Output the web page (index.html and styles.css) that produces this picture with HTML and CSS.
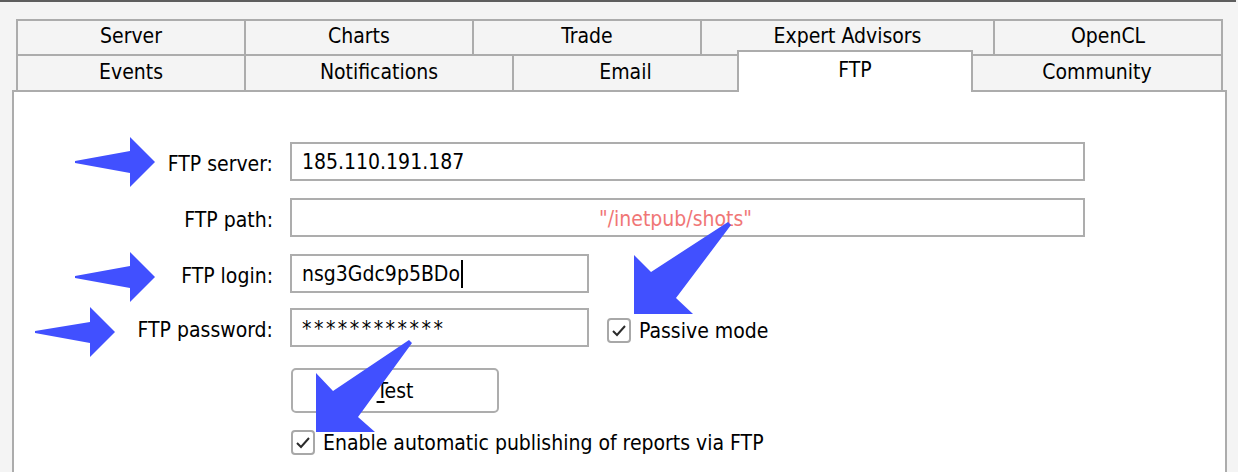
FILE: index.html
```html
<!DOCTYPE html>
<html>
<head>
<meta charset="utf-8">
<link rel="stylesheet" href="styles.css">
</head>
<body>
<div class="window">
  <div class="topline"></div>
  <div class="tabs">
    <div class="row row1">
      <div class="tab w-server">Server</div>
      <div class="tab w-charts">Charts</div>
      <div class="tab w-trade">Trade</div>
      <div class="tab w-ea">Expert Advisors</div>
      <div class="tab w-opencl last">OpenCL</div>
    </div>
    <div class="row row2">
      <div class="tab w-events">Events</div>
      <div class="tab w-notif">Notifications</div>
      <div class="tab w-email">Email</div>
      <div class="tab w-ftp active">FTP</div>
      <div class="tab w-comm last">Community</div>
    </div>
  </div>
  <div class="panel">
    <div class="frow">
      <div class="lbl">FTP server:</div>
      <div class="field wide">185.110.191.187</div>
    </div>
    <div class="frow gap17">
      <div class="lbl">FTP path:</div>
      <div class="field wide"><span class="note">"/inetpub/shots"</span></div>
    </div>
    <div class="frow gap17">
      <div class="lbl">FTP login:</div>
      <div class="field narrow">nsg3Gdc9p5BDo<span class="caret"></span></div>
    </div>
    <div class="frow gap15">
      <div class="lbl">FTP password:</div>
      <div class="field narrow"><span class="secret">************</span></div>
      <div class="check passive">
        <div class="cb"><svg width="16" height="14" viewBox="0 0 16 14"><path d="M2 7 L6 11 L14 2" fill="none" stroke="#2b2b2b" stroke-width="2"/></svg></div>
        <span>Passive mode</span>
      </div>
    </div>
    <div class="frow gap21 indent">
      <div class="btn"><span><u>T</u>est</span></div>
    </div>
    <div class="frow gap17 indent">
      <div class="check">
        <div class="cb"><svg width="16" height="14" viewBox="0 0 16 14"><path d="M2 7 L6 11 L14 2" fill="none" stroke="#2b2b2b" stroke-width="2"/></svg></div>
        <span>Enable automatic publishing of reports via FTP</span>
      </div>
    </div>
  </div>
  <svg class="annot" width="1238" height="472" viewBox="0 0 1238 472">
    <polygon points="75,161 130,151 130,137 155,162 130,187 130,173 75,163"/>
    <polygon points="75,276 130,266 130,252 155,277 130,302 130,288 75,278"/>
    <polygon points="35,331 90,322 90,307 115,332 90,357 90,343 35,333"/>
    <polygon points="728,222 651,272 634,255 634,314 693,314 676,298 731,225"/>
    <polygon points="409,340 333,391 316,373 316,432 375,432 358,417 412,343"/>
  </svg>
</div>
</body>
</html>
```

FILE: styles.css
```css
* { box-sizing: border-box; }

body {
  margin: 0;
  background: #f4f4f4;
  font-family: "DejaVu Sans Condensed", "DejaVu Sans", sans-serif;
  font-stretch: condensed;
  font-size: 21px;
  color: #000;
}

.window {
  position: relative;
  width: 1238px;
  height: 472px;
  overflow: hidden;
}

.topline {
  height: 2px;
  background: #5e5e5e;
  width: 1236px;
}

.tabs {
  margin: 17px 0 0 16px;
}

.row {
  display: flex;
}

.row1 { height: 35px; }
.row2 { height: 36px; }

.tab {
  border-top: 2px solid #acacac;
  border-left: 2px solid #acacac;
  background: #f4f4f4;
  display: flex;
  align-items: center;
  justify-content: center;
  line-height: 1;
  padding-bottom: 2px;
  white-space: nowrap;
}

.tab.last { border-right: 2px solid #acacac; }

.w-server, .w-charts, .w-trade, .w-events { width: 228px; }
.w-ea { width: 293px; }
.w-opencl { width: 230px; }
.w-notif { width: 268px; }
.w-email { width: 225px; }
.w-ftp { width: 236px; }
.w-comm { width: 252px; }

.tab.active {
  position: relative;
  z-index: 1;
  background: #fff;
  height: 42px;
  margin-top: -4px;
  margin-right: -2px;
  border-right: 2px solid #acacac;
  padding-bottom: 4px;
}

.panel {
  margin-left: 12px;
  width: 1215px;
  height: 400px;
  border: 2px solid #acacac;
  border-bottom: none;
  background: #fff;
  padding-top: 50px;
}

.frow {
  display: flex;
  align-items: center;
}

.gap15 { margin-top: 15px; }
.gap17 { margin-top: 17px; }
.gap21 { margin-top: 21px; }

.indent { padding-left: 277px; }

.lbl {
  width: 259px;
  margin-right: 17px;
  text-align: right;
  padding-top: 4px;
  white-space: nowrap;
}

.field {
  height: 39px;
  border: 2px solid #adadad;
  background: #fff;
  padding-left: 10px;
  display: flex;
  align-items: center;
  white-space: nowrap;
}

.wide { width: 795px; }
.narrow { width: 299px; }

.secret {
  letter-spacing: 2.5px;
  padding-top: 2px;
}

.note {
  color: #f07676;
  margin-left: 297px;
  padding-top: 2px;
}

.caret {
  display: inline-block;
  width: 2px;
  height: 28px;
  background: #000;
  margin-left: 1px;
}

.check {
  display: flex;
  align-items: center;
  gap: 8px;
  white-space: nowrap;
}

.passive {
  margin-left: 18px;
  margin-top: 6px;
}

.cb {
  width: 24px;
  height: 25px;
  border: 2px solid #a8a8a8;
  border-radius: 4px;
  background: #fff;
  display: flex;
  align-items: center;
  justify-content: center;
}

.btn {
  width: 208px;
  height: 45px;
  border: 2px solid #adadad;
  border-radius: 5px;
  background: #fff;
  display: flex;
  align-items: center;
  justify-content: center;
}

.btn u {
  text-underline-offset: 3px;
}

.annot {
  position: absolute;
  top: 0;
  left: 0;
  pointer-events: none;
}

.annot polygon {
  fill: #4150ff;
}
```
